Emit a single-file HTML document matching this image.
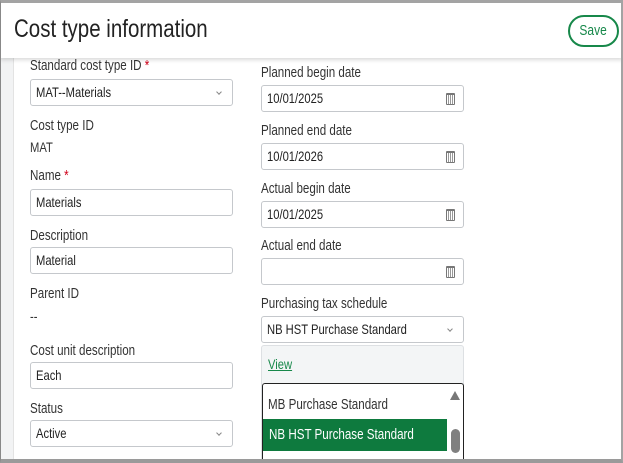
<!DOCTYPE html><html><head><style>
*{box-sizing:border-box;margin:0;padding:0}
body{width:623px;height:463px;overflow:hidden;background:#fff;font-family:"Liberation Sans",sans-serif;color:#333;position:relative;font-size:13px}
.abs{position:absolute}
.t{display:inline-block;transform:scaleX(.8);transform-origin:0 50%;white-space:nowrap}
.frame{position:absolute;left:0;top:0;width:623px;height:463px;border:3px solid #a3a3a3;border-left:1px solid #888;border-right:2px solid #a3a3a3;border-bottom:4px solid #9a9a9a;pointer-events:none;z-index:9}
.strip{left:0;top:58px;width:14px;height:405px;background:#f2f3f4;border-right:1px solid #e3e3e3}
.hdr{left:0;top:0;width:623px;height:58px;background:#fff;box-shadow:0 2px 4px rgba(0,0,0,.15);z-index:2}
.title{left:14px;top:15px;font-size:25px;color:#222}
.save{left:568px;top:15px;width:51px;height:32px;border:2px solid #17884a;border-radius:16px;color:#17884a;font-size:15px;text-align:center;line-height:28px}
.lbl{font-size:14.5px;color:#333}
.lbl b{color:#d0021b;font-weight:normal}
.in{width:203px;height:27px;border:1px solid #c5c8cc;border-radius:3px;padding-left:5px;line-height:25px;font-size:14px;color:#222}
.chev{position:absolute;right:11px;top:10px;width:4px;height:4px;border-right:1px solid #888;border-bottom:1px solid #888;transform:rotate(45deg)}
.cal{position:absolute;right:8px;top:7px;width:9px;height:12px;border:1px solid #777;border-radius:1px;border-top-width:2px;background:repeating-linear-gradient(90deg,#fff 0 1px,#999 1px 2px)}
.val{font-size:14px;color:#333}
</style></head><body>
<div class="abs strip"></div>
<div class="abs hdr"><div class="abs title"><span class="t" style="transform:scaleX(.82)">Cost type information</span></div><div class="abs save"><span class="t" style="transform-origin:50% 50%">Save</span></div></div>

<div class="abs lbl" style="left:30px;top:58px"><span class="t">Standard cost type ID <b>*</b></span></div>
<div class="abs in" style="left:30px;top:79px"><span class="t">MAT--Materials</span><span class="chev"></span></div>
<div class="abs lbl" style="left:30px;top:118px"><span class="t">Cost type ID</span></div>
<div class="abs val" style="left:30px;top:139px"><span class="t">MAT</span></div>
<div class="abs lbl" style="left:30px;top:168px"><span class="t">Name <b>*</b></span></div>
<div class="abs in" style="left:30px;top:189px"><span class="t">Materials</span></div>
<div class="abs lbl" style="left:30px;top:228px"><span class="t">Description</span></div>
<div class="abs in" style="left:30px;top:247px"><span class="t">Material</span></div>
<div class="abs lbl" style="left:30px;top:286px"><span class="t">Parent ID</span></div>
<div class="abs val" style="left:30px;top:308px"><span class="t">--</span></div>
<div class="abs lbl" style="left:30px;top:343px"><span class="t">Cost unit description</span></div>
<div class="abs in" style="left:30px;top:362px"><span class="t">Each</span></div>
<div class="abs lbl" style="left:30px;top:401px"><span class="t">Status</span></div>
<div class="abs in" style="left:30px;top:420px"><span class="t">Active</span><span class="chev"></span></div>

<div class="abs lbl" style="left:261px;top:65px"><span class="t">Planned begin date</span></div>
<div class="abs in" style="left:261px;top:85px"><span class="t">10/01/2025</span><span class="cal"></span></div>
<div class="abs lbl" style="left:261px;top:123px"><span class="t">Planned end date</span></div>
<div class="abs in" style="left:261px;top:143px"><span class="t">10/01/2026</span><span class="cal"></span></div>
<div class="abs lbl" style="left:261px;top:181px"><span class="t">Actual begin date</span></div>
<div class="abs in" style="left:261px;top:201px"><span class="t">10/01/2025</span><span class="cal"></span></div>
<div class="abs lbl" style="left:261px;top:238px"><span class="t">Actual end date</span></div>
<div class="abs in" style="left:261px;top:258px"><span class="cal"></span></div>
<div class="abs lbl" style="left:261px;top:296px"><span class="t">Purchasing tax schedule</span></div>
<div class="abs in" style="left:261px;top:316px"><span class="t">NB HST Purchase Standard</span><span class="chev"></span></div>

<div class="abs" style="left:261px;top:345px;width:203px;height:118px;background:#f3f5f6;border:1px solid #dde0e3;border-radius:3px"></div>
<div class="abs" style="left:268px;top:356px;font-size:14px;color:#17884a"><span class="t" style="text-decoration:underline">View</span></div>
<div class="abs" style="left:262px;top:383px;width:202px;height:80px;background:#fff;border:1.5px solid #222;border-radius:3px;border-bottom:none"></div>
<div class="abs" style="left:268px;top:397px;font-size:14.5px;color:#333"><span class="t">MB Purchase Standard</span></div>
<div class="abs" style="left:263px;top:419px;width:184px;height:32px;background:#0e7a3e;color:#fff;font-size:14.5px;padding-left:6px;line-height:32px"><span class="t">NB HST Purchase Standard</span></div>
<div class="abs" style="left:450px;top:391px;width:0;height:0;border-left:5px solid transparent;border-right:5px solid transparent;border-bottom:9px solid #777"></div>
<div class="abs" style="left:451px;top:429px;width:9px;height:24px;background:#808080;border-radius:5px"></div>
<div class="frame"></div>
</body></html>
